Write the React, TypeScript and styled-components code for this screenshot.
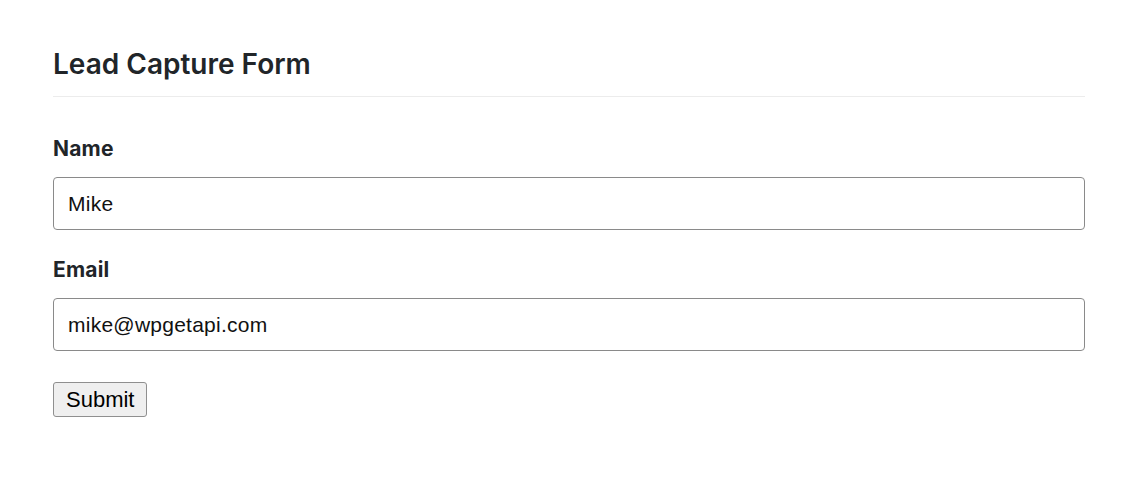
import React from 'react'
import styled, { createGlobalStyle } from 'styled-components'

/*---> Component <---*/
export default function App() {
  return (
    <>
      <GlobalStyle />
      <Page>
        <Title>Lead Capture Form</Title>
        <Form onSubmit={(e) => e.preventDefault()}>
          <Field>
            <Label htmlFor="name">Name</Label>
            <TextInput id="name" type="text" defaultValue="Mike" />
          </Field>
          <Field>
            <Label htmlFor="email">Email</Label>
            <TextInput id="email" type="email" defaultValue="mike@wpgetapi.com" />
          </Field>
          <SubmitButton type="submit">Submit</SubmitButton>
        </Form>
      </Page>
    </>
  )
}

/*---> Styles <---*/

const GlobalStyle = createGlobalStyle`
  body {
    margin: 0;
    background: #ffffff;
    font-family: Inter, "Liberation Sans", Arial, sans-serif;
    color: #212529;
  }
`

const Page = styled.div`
  padding: 47px 55px 0 53px;
`

const Title = styled.h2`
  margin: 0;
  padding-bottom: 14px;
  border-bottom: 1px solid #ececec;
  font-family: Inter, "Liberation Sans", Arial, sans-serif;
  font-size: 28px;
  font-weight: 600;
  line-height: 35px;
  color: #212529;
`

const Form = styled.form`
  display: flex;
  flex-direction: column;
  align-items: flex-start;
  padding-top: 40px;
`

const Field = styled.div`
  display: flex;
  flex-direction: column;
  width: 100%;
  margin-bottom: 28px;
`

const Label = styled.label`
  font-family: Inter, "Liberation Sans", Arial, sans-serif;
  font-size: 21px;
  font-weight: 650;
  line-height: 24px;
  letter-spacing: 0.2px;
  margin-bottom: 16px;
  color: #212529;
`

const TextInput = styled.input`
  box-sizing: border-box;
  width: 100%;
  height: 53px;
  padding: 0 14px;
  border: 1px solid #8a8a8a;
  border-radius: 4px;
  font-family: "Liberation Sans", Arial, sans-serif;
  font-size: 21px;
  letter-spacing: 0.25px;
  color: #111;
  background: #fff;
  outline: none;
`

const SubmitButton = styled.button`
  margin-top: 3px;
  height: 35px;
  padding: 0 12px;
  border: 1px solid #8f8f8f;
  border-radius: 3px;
  background: #efefef;
  font-family: "Liberation Sans", Arial, sans-serif;
  font-size: 22px;
  color: #000;
  cursor: pointer;
`
